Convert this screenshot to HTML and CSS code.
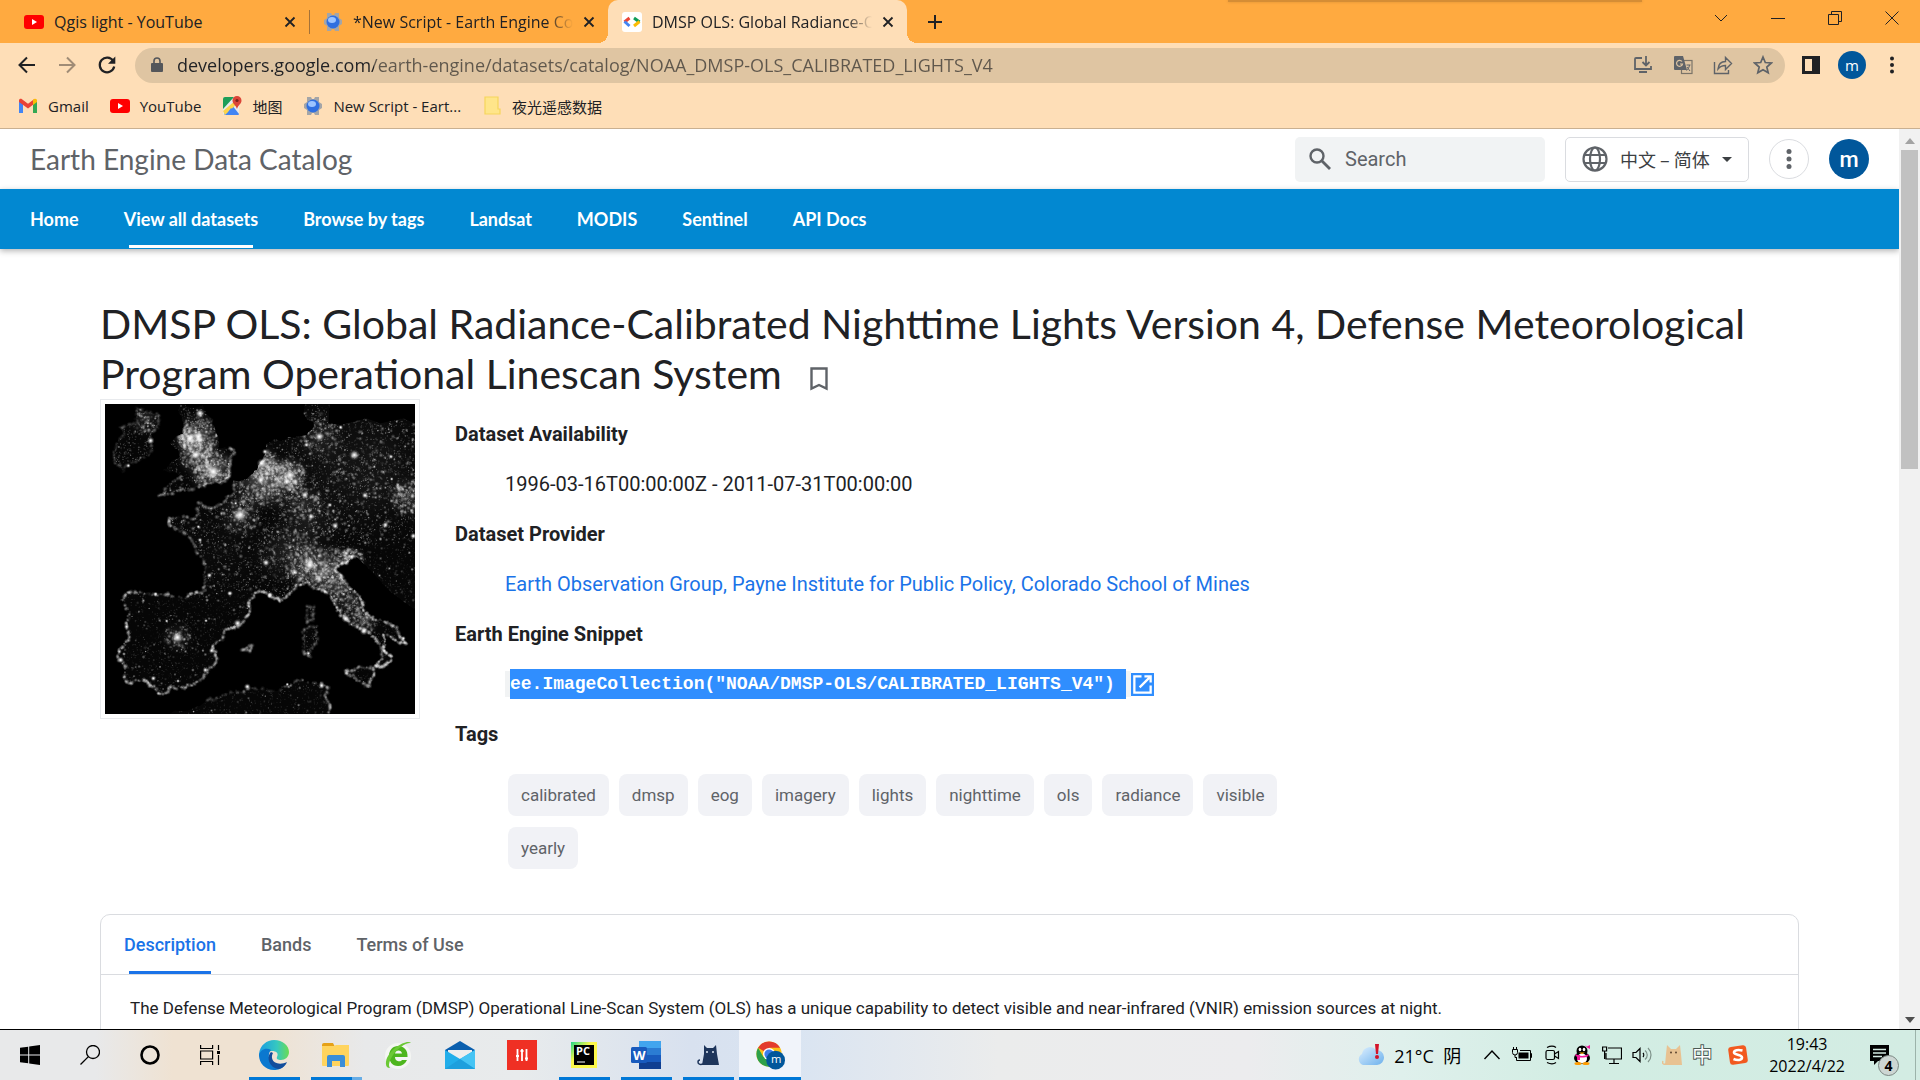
FILE: index.html
```html
<!DOCTYPE html>
<html lang="zh-CN">
<head>
    <meta charset="UTF-8">
    <meta name="viewport" content="width=device-width, initial-scale=1.0">
    <title>DMSP OLS: Global Radiance-Calibrated Nighttime Lights Version 4</title>
    <link rel="stylesheet" href="styles.css">
</head>
<body>

<!-- shared icons -->
<svg class="sprite" aria-hidden="true">
    <symbol id="close" viewBox="0 0 12 12"><path d="M1.5 1.5l9 9M10.5 1.5l-9 9" stroke="#202124" stroke-width="1.8"/></symbol>
    <symbol id="youtube" viewBox="0 0 20 14"><rect width="20" height="14" rx="3" fill="#f00"/><path d="M8 4v6l5-3z" fill="#fff"/></symbol>
    <symbol id="gear" viewBox="0 0 20 20">
        <path d="M4 1h4l1 2h2l1-2h4v5l3 2v4l-3 2v5h-4l-1-2H9l-1 2H4v-5l-3-2V8l3-2z" fill="#a3a5a8"/>
        <circle cx="10" cy="10" r="6.500" fill="#2f6fe0"/><ellipse cx="9" cy="8" rx="4" ry="3" fill="#9cc4ff"/>
    </symbol>
</svg>

<header class="browser">
    <div class="shade"></div>
    <div class="tabs">
        <div class="tab">
            <svg class="icon"><use href="#youtube"/></svg>
            <button class="tab-title">Qgis light - YouTube</button>
            <button class="tab-close" aria-label="Close"><svg><use href="#close"/></svg></button>
        </div>
        <div class="tab divided">
            <svg class="icon"><use href="#gear"/></svg>
            <button class="tab-title long">*New Script - Earth Engine Co</button>
            <button class="tab-close" aria-label="Close"><svg><use href="#close"/></svg></button>
        </div>
        <div class="tab active">
            <svg class="icon" viewBox="0 0 20 20"><rect width="20" height="20" rx="3" fill="#fff"/><g fill="none" stroke-width="3"><path d="M7.500 6L2.500 10" stroke="#ea4335"/><path d="M2.500 9.500L7.500 14" stroke="#4285f4"/><path d="M12 6l5.500 4" stroke="#0f9d58"/><path d="M17.500 9.500L12 14" stroke="#fbbc04"/></g></svg>
            <button class="tab-title long">DMSP OLS: Global Radiance-C</button>
            <button class="tab-close" aria-label="Close"><svg><use href="#close"/></svg></button>
        </div>
        <button class="new-tab" aria-label="New tab"><svg viewBox="0 0 16 16"><path d="M8 1v14M1 8h14" stroke="#202124" stroke-width="2"/></svg></button>
        <div class="window-buttons">
            <button aria-label="Search tabs"><svg viewBox="0 0 14 14"><path d="M1 4l6 6 6-6"/></svg></button>
            <button aria-label="Minimize"><svg viewBox="0 0 14 14"><path d="M0 7.500h14"/></svg></button>
            <button aria-label="Restore"><svg viewBox="0 0 14 14"><path d="M.5 3.500h10v10H.5zM3.500 3.500v-3h10v10h-3"/></svg></button>
            <button aria-label="Close window"><svg viewBox="0 0 14 14"><path d="M.5.5l13 13M13.500.5l-13 13"/></svg></button>
        </div>
    </div>

    <div class="toolbar">
        <button class="tool" aria-label="Back"><svg viewBox="0 0 20 20"><path d="M18 10H3M10 2.500L2.500 10l7.500 7.500" stroke="#202124" stroke-width="2" fill="none"/></svg></button>
        <button class="tool" aria-label="Forward"><svg viewBox="0 0 20 20"><path d="M2 10h15M10 2.500l7.500 7.500-7.500 7.500" stroke="#a08c76" stroke-width="2" fill="none"/></svg></button>
        <button class="tool" aria-label="Reload"><svg viewBox="0 0 20 20"><path d="M16.200 6A7.300 7.300 0 1 0 17.200 11.500" stroke="#202124" stroke-width="2.200" fill="none"/><path d="M18.300 1.500v7.300H11z" fill="#202124"/></svg></button>
        <div class="omnibox">
            <svg class="lock" viewBox="0 0 12 16"><rect y="6" width="12" height="9" rx="1" fill="#54565a"/><path d="M3 7V4a3 3 0 0 1 6 0v3" stroke="#54565a" stroke-width="1.600" fill="none"/></svg>
            <input class="url" type="text" aria-label="Address" value="developers.google.com/earth-engine/datasets/catalog/NOAA_DMSP-OLS_CALIBRATED_LIGHTS_V4">
            <button class="pill-icon" aria-label="Install"><svg viewBox="0 0 20 20" fill="none" stroke="#5f6368" stroke-width="1.800"><path d="M9 3H3a1 1 0 0 0-1 1v10h16v-3M13 1v9M9.500 7l3.500 3.500L16.500 7M6 17h8" /></svg></button>
            <button class="pill-icon" aria-label="Translate"><svg viewBox="0 0 20 20"><rect x="8.500" y="5.500" width="10.500" height="13" fill="none" stroke="#7b7468" stroke-width="1.200"/><path d="M2 1h8l4 14H2a1 1 0 0 1-1-1V2a1 1 0 0 1 1-1z" fill="#5f6368"/><path d="M9 6.500A3 3 0 1 0 9.500 9H7" stroke="#dfc5a2" stroke-width="1.200" fill="none"/><path d="M13.500 10h4m-1 0c-.5 3-1.500 4.500-3 5.500m.5-3.500l3 4" stroke="#5f6368" fill="none"/></svg></button>
            <button class="pill-icon" aria-label="Share"><svg viewBox="0 0 20 20" fill="none" stroke="#5f6368" stroke-width="1.400"><path d="M1.500 7v11.500h14V15M5 14c.5-5 3-7.500 7.500-7.500V2.500l6 6-6 6v-4c-3.500 0-5.500 1-7.500 3.500z"/></svg></button>
            <button class="pill-icon" aria-label="Bookmark this tab"><svg viewBox="0 0 20 20" fill="none" stroke="#5f6368" stroke-width="1.700"><path d="M10 2l2.300 5.500 6 .5-4.500 4 1.400 5.800L10 14.700l-5.200 3.100L6.200 12 1.700 8l6-.5z"/></svg></button>
        </div>
        <button class="tool" aria-label="Side panel"><svg viewBox="0 0 20 20"><path d="M1 1h18v18H1zM4 4v12h7V4z" fill="#202124" fill-rule="evenodd"/></svg></button>
        <button class="tool profile" aria-label="Profile">m</button>
        <button class="tool" aria-label="Menu"><svg viewBox="0 0 20 20" fill="#202124"><circle cx="10" cy="3.500" r="2"/><circle cx="10" cy="10" r="2"/><circle cx="10" cy="16.500" r="2"/></svg></button>
    </div>

    <nav class="bookmarks">
        <a href="#"><svg class="icon" viewBox="0 0 20 20"><path d="M1 4v13h4V7z" fill="#4285f4"/><path d="M19 4v13h-4V7z" fill="#34a853"/><path d="M1 4.500C1 2.500 3 2.500 4 3.200l6 4.600 6-4.600V8l-6 4.600L1 6z" fill="#ea4335"/><path d="M15 4l1.200-.9c1.300-.8 2.800 0 2.800 1.400V6l-4 3z" fill="#fbbc04"/></svg>Gmail</a>
        <a href="#"><svg class="icon"><use href="#youtube"/></svg>YouTube</a>
        <a href="#"><svg class="icon" viewBox="0 0 20 20"><path d="M1 3a2 2 0 0 1 2-2h14v16l-2 2H3a2 2 0 0 1-2-2z" fill="#e8eaed"/><path d="M3 1h9L1 13V3a2 2 0 0 1 2-2z" fill="#1e9e58"/><path d="M2 18L10 9l7 9-1 1H3z" fill="#4285f4"/><path d="M1 15L14 4l2 3L3 19z" fill="#fcd34b"/><path d="M9 12l8 7H4z" fill="#4285f4"/><path d="M15 0a4.500 4.500 0 0 1 4.500 4.500C19.500 8 16 9 15 13 14 9 10.500 8 10.500 4.500A4.500 4.500 0 0 1 15 0z" fill="#db4437"/><circle cx="15" cy="4.500" r="1.600" fill="#7b231b"/></svg>地图</a>
        <a href="#"><svg class="icon"><use href="#gear"/></svg>New Script - Eart...</a>
        <a href="#"><svg class="icon" viewBox="0 0 20 20"><path d="M3 1h13v12h2v5H3z" fill="#ffe58a" stroke="#f5d55c" stroke-width="1.200"/></svg>夜光遥感数据</a>
    </nav>
</header>

<div class="viewport">
    <div class="page">
        <header class="site-header">
            <a class="site-name" href="#">Earth Engine Data Catalog</a>
            <label class="search">
                <svg viewBox="0 0 24 24"><circle cx="9" cy="9" r="6.500" fill="none" stroke="#5f6368" stroke-width="2.400"/><path d="M14 14l8 8" stroke="#5f6368" stroke-width="2.800"/></svg>
                <input type="search" placeholder="Search" aria-label="Search">
            </label>
            <label class="language">
                <svg class="globe" viewBox="0 0 26 26" fill="none" stroke="#5f6368" stroke-width="2.200"><circle cx="13" cy="13" r="11.500"/><ellipse cx="13" cy="13" rx="5" ry="11.500"/><path d="M2.500 9h21M2.500 17h21"/></svg>
                <select aria-label="Language"><option>中文 – 简体</option></select>
                <svg class="arrow" viewBox="0 0 10 5"><path d="M0 0h10L5 5z" fill="#3c4043"/></svg>
            </label>
            <button class="more" aria-label="More"><svg viewBox="0 0 20 20" fill="#5f6368"><circle cx="10" cy="2.500" r="2.500"/><circle cx="10" cy="10" r="2.500"/><circle cx="10" cy="17.500" r="2.500"/></svg></button>
            <button class="avatar" aria-label="Account">m</button>
        </header>

        <nav class="site-nav">
            <a href="#">Home</a>
            <a href="#" class="current">View all datasets</a>
            <a href="#">Browse by tags</a>
            <a href="#">Landsat</a>
            <a href="#">MODIS</a>
            <a href="#">Sentinel</a>
            <a href="#">API Docs</a>
        </nav>

        <main>
            <h1>DMSP OLS: Global Radiance-Calibrated Nighttime Lights Version 4, Defense Meteorological Program Operational Linescan System
                <button class="save" aria-label="Save page"><svg viewBox="0 0 18 24"><path d="M1.500 1.500h15v20L9 18l-7.500 3.500z" fill="none" stroke="#5f6368" stroke-width="2.400"/></svg></button></h1>

            <div class="dataset">
                <div class="sample"><canvas id="lights" width="310" height="310"></canvas></div>
                <dl>
                    <dt>Dataset Availability</dt>
                    <dd>1996-03-16T00:00:00Z - 2011-07-31T00:00:00</dd>
                    <dt>Dataset Provider</dt>
                    <dd><a href="#">Earth Observation Group, Payne Institute for Public Policy, Colorado School of Mines</a></dd>
                    <dt>Earth Engine Snippet</dt>
                    <dd class="snippet"><code><span>ee.ImageCollection("NOAA/DMSP-OLS/CALIBRATED_LIGHTS_V4")</span></code><a href="#" aria-label="Open in editor"><svg viewBox="0 0 24 24" fill="none" stroke="#fff" stroke-width="2.400"><path d="M11 3.500H3.500v17h17V13M14 3.500h6.500V10M20 4L9 15"/></svg></a></dd>
                    <dt>Tags</dt>
                    <dd class="chips">
                        <a href="#">calibrated</a>
                        <a href="#">dmsp</a>
                        <a href="#">eog</a>
                        <a href="#">imagery</a>
                        <a href="#">lights</a>
                        <a href="#">nighttime</a>
                        <a href="#">ols</a>
                        <a href="#">radiance</a>
                        <a href="#">visible</a>
                        <a href="#">yearly</a>
                    </dd>
                </dl>
            </div>

            <section class="card">
                <div class="card-tabs">
                    <button class="selected">Description</button>
                    <button>Bands</button>
                    <button>Terms of Use</button>
                </div>
                <p>The Defense Meteorological Program (DMSP) Operational Line-Scan System (OLS) has a unique capability to detect visible and near-infrared (VNIR) emission sources at night.</p>
            </section>
        </main>
    </div>
    <div class="scrollbar">
        <svg viewBox="0 0 10 6"><path d="M5 0l5 6H0z" fill="#a3a3a3"/></svg>
        <div class="track"><div class="thumb"></div></div>
        <svg viewBox="0 0 10 6"><path d="M5 6l5-6H0z" fill="#505050"/></svg>
    </div>
</div>

<footer class="taskbar">
    <div class="system">
        <button aria-label="Start"><svg viewBox="0 0 20 20"><path d="M0 2.800l8.200-1.100v7.800H0zM9.200 1.500L20 0v9.500H9.200zM0 10.500h8.200v7.800L0 17.200zM9.200 10.500H20V20L9.200 18.500z"/></svg></button>
        <button aria-label="Search"><svg viewBox="0 0 20 20" fill="none" stroke="#000" stroke-width="1.300"><circle cx="13" cy="7" r="6.500"/><path d="M8.400 11.600L.5 19.500"/></svg></button>
        <button aria-label="Cortana"><svg viewBox="0 0 20 20"><circle cx="10" cy="10" r="8.500" fill="none" stroke="#000" stroke-width="2.600"/></svg></button>
        <button aria-label="Task view"><svg viewBox="0 0 20 20" fill="none" stroke="#000" stroke-width="1.200"><path d="M.6 0v3.500h12V0M.6 6h12v8H.6zM.6 20v-3.500h12V20M18.500 0v5M18.500 10v10"/><path d="M17 6h3v3h-3z" fill="#000" stroke="none"/></svg></button>
    </div>
    <div class="apps">
        <button class="running" aria-label="Edge"><svg viewBox="0 0 30 30"><defs><linearGradient id="edgeTop"><stop offset="0" stop-color="#1b9de2"/><stop offset=".6" stop-color="#36c8c0"/><stop offset="1" stop-color="#6bdc52"/></linearGradient></defs><path d="M0 14C1 5 8 0 15 0c9 0 15 6 15 12 0 5-4 8-8 8-3 0-5-1-4-3 2-4-1-6-5-6C7 11 3 14 0 17z" fill="url(#edgeTop)"/><path d="M0 15c1-5 7-8 12-5-3 3-3 9 1 13 4 4 9 5 13 2-3 4-7 5-11 5C6 30 0 23 0 15z" fill="#0b78cf"/><path d="M12 12c-5 5-2 16 8 17 4-1 7-4 8-7-6 3-14 2-15-4-.3-2 .3-4 1-5z" fill="#124d9c"/></svg></button>
        <button class="running stacked" aria-label="Explorer"><svg viewBox="0 0 30 30"><path d="M1 5a2 2 0 0 1 2-2h9l2 4H1z" fill="#e6a117"/><path d="M1 6h12l2-1h13v20a1 1 0 0 1-1 1H2a1 1 0 0 1-1-1z" fill="#ffd45e"/><path d="M6 27V17a2 2 0 0 1 2-2h14a2 2 0 0 1 2 2v10h-5v-6h-8v6z" fill="#3a8ed8"/></svg></button>
        <button aria-label="360 browser"><svg viewBox="0 0 30 30"><circle cx="15" cy="16" r="13" fill="#f4f6f3"/><path d="M24 20c-2 4-5 6-9 6-6 0-9-5-9-10 0-6 4-10 9-10 6 0 10 4 9.500 11H12c0 5 6 5 7 3zM12 13.500h7c-.5-4-6.500-4-7 0z" fill="#4eb61e" fill-rule="evenodd"/><path d="M28 3C24-1 5 9 3 22c-.5 4 1 6 4 6-2-2-1-7 3-13C14 9 23 2 28 3z" fill="#6bc935"/></svg></button>
        <button aria-label="Mail"><svg viewBox="0 0 30 30"><path d="M0 10L15 1l15 9v3H0z" fill="#0a5fae"/><path d="M3 10h24v9H3z" fill="#eee"/><path d="M0 10l15 9 15-9v19H0z" fill="#22aeea"/><path d="M15 19L30 10v19z" fill="#45c4f4"/><path d="M0 29l15-10 15 10z" fill="#1d9fdd"/></svg></button>
        <button aria-label="Mixer"><svg viewBox="0 0 30 30"><path d="M0 0h30v30H0z" fill="#ef3024"/><path d="M10.500 9v12M15 9v12M19.500 9v12" stroke="#fff" stroke-width="1.800"/><path d="M9 16h3M13.500 11h3M18 18.500h3" stroke="#fff" stroke-width="2"/></svg></button>
        <button class="running" aria-label="PyCharm"><svg viewBox="0 0 30 30"><defs><linearGradient id="pc" x2="1" y2="1"><stop stop-color="#21d789"/><stop offset=".4" stop-color="#fcf84a"/></linearGradient></defs><path d="M2 2h26v26H2z" fill="url(#pc)"/><path d="M5 5h20v20H5z"/><path d="M8 22h8" stroke="#aaa" stroke-width="1.500"/><text class="pc-text" x="7" y="15">PC</text></svg></button>
        <button class="running" aria-label="Word"><svg viewBox="0 0 30 30"><path d="M8 1h22v28H8z" fill="#103f91"/><path d="M8 1h22v8H8z" fill="#41a5ee"/><path d="M8 8h22v7H8z" fill="#2b7cd3"/><path d="M8 15h22v7H8z" fill="#185abd"/><rect y="7" width="16" height="16" rx="1.500" fill="#185abd"/><text class="word-text" x="2" y="20">W</text></svg></button>
        <button class="running" aria-label="Cat"><svg viewBox="0 0 30 30"><path d="M11 5l3 3h6l3-3 1 9 2 11H9l2-11z" fill="#1e355b"/><path d="M10 24c-3 1-5 0-5-2 0-1 1-2 2-2" fill="none" stroke="#1e355b" stroke-width="1.500"/><circle cx="14" cy="12" r="1" fill="#dfe7f2"/><circle cx="20" cy="12" r="1" fill="#dfe7f2"/></svg></button>
        <button class="running open" aria-label="Chrome"><svg viewBox="0 0 32 32"><circle cx="15" cy="15" r="13.500" fill="#fbc116"/><path d="M15 15L3.300 8.300A13.500 13.500 0 0 1 26.700 8.300H15z" fill="#e33b2e"/><path d="M15 15l6 3-6 10.500A13.500 13.500 0 0 1 3.300 8.300L9 18z" fill="#2da04a"/><circle cx="15" cy="15" r="6.500" fill="#fff"/><circle cx="15" cy="15" r="5" fill="#3b7ded"/><circle cx="22" cy="21.500" r="10" fill="#01579b"/><text class="chrome-text" x="17" y="25">m</text></svg></button>
    </div>
    <div class="tray">
        <button class="weather"><svg viewBox="0 0 28 24"><defs><linearGradient id="cloud" y2="1" x2="1"><stop stop-color="#dcefff"/><stop offset="1" stop-color="#6db1ec"/></linearGradient></defs><path d="M7 22a6 6 0 0 1-1-11 8 8 0 0 1 14-4 7.500 7.500 0 0 1 1 15z" fill="url(#cloud)"/><path d="M19 1h4l-1 10h-2z" fill="#d4132a"/><circle cx="21" cy="14" r="2" fill="#d4132a"/></svg>21°C&nbsp;&nbsp;阴</button>
        <div class="tray-icons">
            <button aria-label="Hidden icons"><svg viewBox="0 0 20 20" fill="none" stroke="#000" stroke-width="1.400"><path d="M2.500 14L10 6l7.500 8"/></svg></button>
            <button aria-label="Battery"><svg viewBox="0 0 20 20"><path d="M6.500 7.500h10v6h-10z"/><path d="M4.500 12v3.500h14v-10H8M18.500 8.500h1v4h-1M.5 4.500h5v3a2.500 2.500 0 0 1-5 0zM1.500 2v3M4.500 2v3M3 10v2.500h2" fill="none" stroke="#000"/></svg></button>
            <button aria-label="Meet now"><svg viewBox="0 0 20 20" fill="none" stroke="#000" stroke-width="1.200"><rect x="4" y="5.500" width="8.500" height="9" rx="1.500"/><path d="M12.500 9l4-2.500v7l-4-2.500M5 2.500c3-1.500 7-1.500 9 0M5 17.500c3 1.500 7 1.500 9 0"/></svg></button>
            <button aria-label="QQ"><svg viewBox="0 0 20 20"><ellipse cx="10" cy="6" rx="5.500" ry="5.500"/><ellipse cx="10" cy="13" rx="8" ry="6"/><ellipse cx="10" cy="13.500" rx="5" ry="5" fill="#fff"/><ellipse cx="8" cy="4.500" rx="1.300" ry="1.800" fill="#fff"/><ellipse cx="12" cy="4.500" rx="1.300" ry="1.800" fill="#fff"/><path d="M3.500 9c4 2.500 9 2.500 13 0v2c-4 2-9 2-13 0zM5 10h3v5H5zM13 0l2 1.500L18 0v4l-3-1.500z" fill="#f2189c"/><path d="M7 7.500h6L10 9z" fill="#ffb000"/><ellipse cx="6" cy="18.500" rx="3.500" ry="1.500" fill="#ff9d00"/><ellipse cx="14" cy="18.500" rx="3.500" ry="1.500" fill="#ff9d00"/></svg></button>
            <button aria-label="Network"><svg viewBox="0 0 20 20" fill="none" stroke="#000" stroke-width="1.200"><path d="M6 3h13.500v11H4V8M7 18.500h10M12 14v4.500M.6 2h4v4h-4zM2.600 6v8"/></svg></button>
            <button aria-label="Volume"><svg viewBox="0 0 20 20" fill="none" stroke="#000" stroke-width="1.200"><path d="M1 7.500h3l4-4v13l-4-4H1zM11 8c1 1 1 3 0 4"/><path d="M13 5.500c3 2.500 3 6.500 0 9M16 3c4 4 4 10 0 14" stroke="#7d9189"/></svg></button>
            <button aria-label="Cat"><svg viewBox="0 0 20 20"><path d="M5 0l4 4h5l4-4 1 9 1 11H3L4 9z" fill="#e8c292"/><path d="M4 19c-3 1-4-1-3-3" stroke="#e8c292" stroke-width="1.500" fill="none"/><circle cx="9" cy="7.500" r="1" fill="#5f4630"/><circle cx="14" cy="7.500" r="1" fill="#5f4630"/></svg></button>
            <button class="ime">中</button>
            <button class="sogou" aria-label="Sogou"><svg viewBox="0 0 20 20"><rect x="1" y="1" width="18" height="18" rx="3" fill="#f2591f" transform="rotate(-8 10 10)"/><path d="M14.500 5.500C10 4.500 6 5 6 7.500s8 2 8 5-5 3-8.500 1.500" fill="none" stroke="#fff" stroke-width="2.600"/></svg></button>
        </div>
        <button class="clock"><span>19:43</span><span>2022/4/22</span></button>
        <button class="notifications" aria-label="Notifications"><svg viewBox="0 0 22 22"><path d="M1 1h19v16H9l-4 4v-4H1z"/><path d="M4 5.500h13M4 9h13M4 12.500h9" stroke="#d3eae2" stroke-width="1.300"/></svg><span class="badge">4</span></button>
        <button class="show-desktop" aria-label="Show desktop"></button>
    </div>
</footer>

<script src="lights.js"></script>
</body>
</html>
```
FILE: styles.css
```css
* {
    box-sizing: border-box;
}

body {
    margin: 0;
    height: 100vh;
    display: flex;
    flex-direction: column;
    overflow: hidden;
    font-family: Roboto, "Noto Sans CJK SC", sans-serif;
    color: #202124;
    background-color: #fff;
}

button {
    border: none;
    padding: 0;
    background: none;
    color: inherit;
    font: inherit;
    display: flex;
    align-items: center;
    justify-content: center;
}

a {
    color: inherit;
    text-decoration: none;
}

.sprite {
    display: none;
}

/* browser chrome */
.browser {
    position: relative;
    flex-shrink: 0;
    background-color: #fedeb7;
    border-bottom: 1px solid #c9b091;
    font-family: "Open Sans", "Noto Sans CJK SC", sans-serif;
    font-size: 15px;
}

.shade {
    position: absolute;
    top: 0;
    right: 278px;
    width: 414px;
    height: 2px;
    background-color: #d58d35;
    box-shadow: 0 0 3px #d58d35;
}

.tabs {
    display: flex;
    height: 43px;
    padding-left: 10px;
    background-color: #ffaa40;
    font-size: 16px;
}

.tab {
    position: relative;
    display: flex;
    align-items: center;
    width: 299px;
    padding: 0 13px 0 14px;
    gap: 10px;
}

.tab.divided {
    background: linear-gradient(#a57238, #a57238) 0 10px / 1px 24px no-repeat;
}

.tab.active {
    background-color: #fedeb7;
    border-radius: 10px 10px 0 0;
}

/* curved feet of the active tab */
.tab.active::before,
.tab.active::after {
    content: "";
    position: absolute;
    bottom: 0;
    width: 10px;
    height: 10px;
}

.tab.active::before {
    right: 100%;
    background: radial-gradient(circle at 0 0, transparent 10px, #fedeb7 10px);
}

.tab.active::after {
    left: 100%;
    background: radial-gradient(circle at 100% 0, transparent 10px, #fedeb7 10px);
}

.icon {
    width: 20px;
    height: 20px;
    flex-shrink: 0;
}

.tab-title {
    flex: 1;
    min-width: 0;
    white-space: nowrap;
    justify-content: flex-start;
}

.tab-title.long {
    -webkit-mask-image: linear-gradient(to right, #000 88%, transparent);
    mask-image: linear-gradient(to right, #000 88%, transparent);
}

.tab-close svg {
    width: 12px;
    height: 12px;
}

.new-tab {
    width: 56px;
}

.new-tab svg {
    width: 16px;
    height: 16px;
}

.window-buttons {
    display: flex;
    margin-left: auto;
    height: 36px;
}

.window-buttons button {
    width: 57px;
}

.window-buttons svg {
    width: 14px;
    height: 14px;
    fill: none;
    stroke: #202124;
}

.toolbar {
    display: flex;
    align-items: center;
    height: 44px;
    padding: 0 8px 0 7px;
}

.tool {
    width: 40px;
    height: 40px;
}

.tool svg {
    width: 20px;
    height: 20px;
}

.omnibox {
    flex: 1;
    display: flex;
    align-items: center;
    height: 35px;
    margin: 0 6px 0 8px;
    padding: 0 2px 0 16px;
    border-radius: 18px;
    background-color: #dfc5a2;
}

.lock {
    width: 12px;
    height: 16px;
    margin-right: 14px;
}

.url {
    flex: 1;
    border: none;
    outline: none;
    padding: 0;
    font-family: "Open Sans", sans-serif;
    font-size: 18px;
    /* host dark, path grey */
    color: transparent;
    background: linear-gradient(to right, #202124 197px, #5f574c 197px);
    -webkit-background-clip: text;
    background-clip: text;
}

.pill-icon {
    width: 40px;
}

.pill-icon svg {
    width: 20px;
    height: 20px;
}

.tool.profile {
    width: 28px;
    height: 28px;
    margin: 0 6px 0 7px;
    border-radius: 50%;
    background-color: #01579b;
    color: #fff;
    font-size: 15px;
}

.bookmarks {
    display: flex;
    align-items: center;
    height: 41px;
    padding: 0 0 3px 18px;
    gap: 21px;
}

.bookmarks a {
    display: flex;
    align-items: center;
    gap: 10px;
}

/* web page */
.viewport {
    flex: 1;
    min-height: 0;
    display: flex;
}

.page {
    flex: 1;
    min-width: 0;
    overflow: hidden;
}

.site-header {
    display: flex;
    align-items: center;
    height: 60px;
    padding: 0 30px;
    gap: 20px;
}

.site-name {
    margin-right: auto;
    font-family: Lato, sans-serif;
    font-size: 28px;
    color: #5f6368;
}

.search {
    display: flex;
    align-items: center;
    width: 250px;
    height: 45px;
    padding: 0 13px;
    gap: 13px;
    border-radius: 5px;
    background-color: #f1f3f4;
}

.search svg {
    width: 24px;
    height: 24px;
    flex-shrink: 0;
}

.search input {
    width: 100%;
    border: none;
    outline: none;
    padding: 0;
    background: none;
    font-family: Roboto, sans-serif;
    font-size: 20px;
}

.search input::placeholder {
    color: #5f6368;
}

.language {
    display: flex;
    align-items: center;
    width: 184px;
    height: 45px;
    padding: 0 16px;
    border: 1px solid #dadce0;
    border-radius: 5px;
}

.globe {
    width: 26px;
    height: 26px;
    margin-right: 12px;
}

.language select {
    flex: 1;
    min-width: 0;
    appearance: none;
    border: none;
    padding: 0;
    background: none;
    color: #3c4043;
    font-family: "Noto Sans CJK SC", sans-serif;
    font-size: 18px;
}

.arrow {
    width: 10px;
    height: 5px;
}

.more,
.avatar {
    width: 40px;
    height: 40px;
    border-radius: 50%;
}

.more {
    border: 1px solid #dadce0;
}

.more svg {
    width: 20px;
    height: 20px;
}

.avatar {
    background-color: #01579b;
    color: #fff;
    font-size: 22px;
    font-weight: 500;
}

.site-nav {
    position: relative;
    display: flex;
    height: 60px;
    padding: 0 30px;
    gap: 45px;
    background-color: #0288d1;
    box-shadow: 0 2px 6px rgba(0, 0, 0, 0.3);
    color: #fff;
    font-family: Lato, sans-serif;
    font-size: 18px;
    font-weight: 700;
}

.site-nav a {
    display: flex;
    align-items: center;
}

.current {
    background: linear-gradient(#fff, #fff) center 56px / calc(100% - 10px) 3px no-repeat;
}

main {
    padding: 50px 100px 0;
}

h1 {
    margin: 0;
    font-family: Lato, sans-serif;
    font-size: 41px;
    line-height: 50px;
    font-weight: 400;
}

.save {
    display: inline-flex;
    margin-left: 18px;
    vertical-align: middle;
}

.save svg {
    width: 18px;
    height: 24px;
}

.dataset {
    display: flex;
    align-items: flex-start;
    gap: 35px;
    font-size: 20px;
    line-height: 30px;
}

.sample {
    padding: 4px;
    border: 1px solid #e8eaed;
}

.sample canvas {
    display: block;
    background-color: #000;
}

dl {
    margin: 20px 0 0;
    max-width: 850px;
}

dt {
    font-weight: 700;
}

dd {
    margin: 20px 0 20px 50px;
}

dd a {
    color: #1a73e8;
}

.snippet {
    display: flex;
    align-items: center;
}

code {
    padding: 0 5px;
    background: linear-gradient(#f1f3f4, #f1f3f4) center / 100% 26px no-repeat;
    font-family: "Liberation Mono", monospace;
    font-size: 18px;
    font-weight: 700;
}

code span {
    display: block;
    padding-right: 11px;
    line-height: 30px;
    color: #fff;
    background-color: #308efe;
}

.snippet a {
    display: flex;
    background-color: #308efe;
}

.snippet svg {
    width: 23px;
    height: 23px;
}

.chips {
    display: flex;
    flex-wrap: wrap;
    gap: 11px 10px;
    margin: 25px 0 0 53px;
}

.chips a {
    padding: 0 13px;
    border-radius: 8px;
    background-color: #f1f2f6;
    color: #5f6368;
    font-size: 17px;
    line-height: 42px;
}

.card {
    margin-top: 45px;
    border: 1px solid #dadce0;
    border-radius: 10px;
}

.card-tabs {
    display: flex;
    height: 60px;
    padding: 0 23px;
    gap: 45px;
    border-bottom: 1px solid #dadce0;
    color: #5f6368;
    font-size: 18px;
    font-weight: 500;
}

.card-tabs .selected {
    color: #1a73e8;
    background: linear-gradient(#1a73e8, #1a73e8) center 56px / calc(100% - 10px) 3px no-repeat;
}

.card p {
    margin: 0;
    padding: 18px 29px;
    font-size: 17px;
    line-height: 30px;
}

.scrollbar {
    display: flex;
    flex-direction: column;
    align-items: center;
    width: 21px;
    padding: 9px 0 6px;
    gap: 6px;
    background-color: #f1f1f1;
}

.scrollbar svg {
    width: 10px;
    height: 6px;
}

.track {
    flex: 1;
    width: 17px;
}

.thumb {
    height: 37%;
    background-color: #c1c1c1;
}

/* taskbar */
.taskbar {
    display: flex;
    flex-shrink: 0;
    height: 51px;
    border-top: 1px solid #000;
    background: linear-gradient(to right, #e8e9ea 5%, #efe2d2 9%, #efe2d2 14%, #e8e9ea 19%, #e8ebec 27%, #d8e1ef 36%, #d9e4f2 41%, #ebecec 52%, #ececee 65%, #dff0ec 73%, #d2ede3 82%, #d3ece3);
    font-family: "Open Sans", "Noto Sans CJK SC", sans-serif;
    color: #000;
}

.system,
.apps,
.tray,
.tray-icons {
    display: flex;
}

.system button {
    width: 60px;
}

.system svg {
    width: 20px;
    height: 20px;
}

.apps {
    margin-left: 3px;
}

.apps button {
    width: 62px;
}

.apps svg {
    width: 30px;
    height: 30px;
}

.running {
    background: linear-gradient(#0078d7, #0078d7) center bottom / 51px 3px no-repeat;
}

.stacked {
    background: linear-gradient(to right, #0078d7 80%, #67ade6 80%) center bottom / 51px 3px no-repeat;
}

.open {
    background: linear-gradient(#0078d7, #0078d7) center bottom / 100% 3px no-repeat, #f1f4fa;
}

.pc-text,
.word-text,
.chrome-text {
    fill: #fff;
    font-size: 11px;
    font-weight: 700;
}

.word-text {
    font-size: 13px;
}

.chrome-text {
    font-size: 12px;
    font-weight: 400;
}

.tray {
    margin-left: auto;
}

.weather {
    gap: 10px;
    margin-right: 16px;
    font-size: 18px;
}

.weather svg {
    width: 28px;
    height: 24px;
}

.tray-icons {
    align-items: center;
}

.tray-icons button {
    width: 30px;
}

.tray-icons svg {
    width: 20px;
    height: 20px;
}

.tray-icons .ime {
    font-family: "Noto Sans CJK SC", sans-serif;
    font-size: 20px;
    line-height: 30px;
    color: #fff;
    -webkit-text-stroke: 2px #4b5a55;
    paint-order: stroke fill;
}

.tray-icons .sogou {
    margin-left: 6px;
}

.clock {
    flex-direction: column;
    margin: 0 24px 0 16px;
    font-size: 16px;
    line-height: 22px;
}

.notifications {
    position: relative;
    width: 30px;
    margin-right: 16px;
    justify-content: flex-start;
}

.notifications svg {
    width: 22px;
    height: 22px;
}

.badge {
    position: absolute;
    right: 0;
    bottom: 4px;
    width: 21px;
    height: 21px;
    border: 1px solid #7c8783;
    border-radius: 50%;
    background-color: #cdd6d3;
    font-size: 14px;
    line-height: 19px;
    font-weight: 700;
    text-align: center;
}

.show-desktop {
    width: 5px;
    border-left: 1px solid #9cb3aa;
}
```
FILE: lights.js
```js
// Night lights of Western Europe, drawn on the dataset thumbnail.
// Shapes use a 1020 x 1272 grid, the canvas shows the part from (45, 342).
var canvas = document.getElementById("lights");
var ctx = canvas.getContext("2d");

ctx.scale(1 / 3, 1 / 3);
ctx.translate(-45, -342);

var seed = 7;
function rand() {
    seed = (seed * 16807) % 2147483647;
    return seed / 2147483647;
}

var land = {
    ireland: [[140,355],[205,370],[205,400],[185,430],[190,480],[150,510],[100,545],[75,520],[75,480],[100,440],[90,410],[140,400]],
    britain: [[270,342],[340,342],[370,390],[385,440],[385,475],[420,475],[435,490],[420,525],[418,560],[390,582],[330,588],[270,600],[205,618],[230,590],[280,555],[220,540],[240,520],[270,500],[240,460],[280,430],[280,400],[265,370]],
    balkans: [[645,342],[720,342],[715,400],[750,405],[830,385],[870,400],[940,385],[975,400],[975,960],[900,905],[840,840],[810,810],[795,797]],
    italy: [[795,797],[765,820],[735,840],[760,870],[800,910],[820,960],[850,990],[920,1020],[950,1060],[930,1060],[880,1035],[880,1075],[905,1100],[880,1130],[855,1130],[875,1080],[850,1040],[800,1010],[765,985],[735,950],[700,900],[655,875],[610,900],[570,935],[540,920],[500,905]],
    iberia: [[500,905],[475,935],[475,975],[440,1010],[405,1020],[365,1075],[380,1110],[350,1150],[310,1185],[240,1190],[210,1215],[180,1190],[160,1170],[105,1175],[85,1110],[105,1060],[110,1000],[95,930],[125,905],[200,915],[290,920],[335,910]],
    france: [[335,910],[345,860],[340,810],[310,760],[260,720],[235,700],[240,685],[310,690],[325,635],[360,655],[400,640],[430,610],[430,570],[490,550],[520,500],[530,460],[580,450],[650,435],[670,400],[640,370]],
    sicily: [[765,1140],[800,1135],[850,1130],[850,1160],[840,1190],[800,1170],[770,1150]],
    sardinia: [[635,1025],[680,1010],[680,1060],[660,1100],[640,1090]],
    corsica: [[650,950],[672,950],[670,990],[650,1000]],
    mallorca: [[455,1078],[485,1065],[480,1085]],
    africa: [[190,1272],[350,1230],[420,1205],[480,1190],[600,1185],[690,1180],[715,1195],[705,1220],[720,1250],[710,1272]]
};

// x, y, radius, strength
var regions = [
    [325,440,60,0.5],[370,545,60,0.6],[320,495,50,0.4],[300,445,35,0.5],[515,520,45,0.5],[510,575,70,0.5],
    [600,555,45,0.5],[560,580,70,0.25],[650,700,90,0.15],[640,640,50,0.2],[690,440,60,0.2],
    [660,825,60,0.45],[730,835,60,0.4],[785,810,35,0.4],[955,620,50,0.35],[850,600,150,0.08],[720,520,170,0.08],
    [780,930,50,0.25],[720,890,50,0.3],[820,990,40,0.3],[165,380,50,0.2],[450,675,55,0.25],[262,1042,40,0.2],
    [400,780,150,0.05],[590,790,80,0.2],[880,480,150,0.06]
];

var cities = [
    [370,545,16],[318,494,11],[325,440,11],[300,445,11],[330,370,10],[182,452,8],[515,520,10],[512,570,9],
    [600,555,11],[590,575,8],[688,440,10],[793,495,11],[450,675,16],[262,1042,13],[443,1000,9],[660,825,12],
    [614,847,7],[767,985,9],[822,1023,9],[528,818,8],[358,856,6],[420,910,6],[330,750,5],[736,708,7],
    [886,705,7],[825,616,7],[645,615,8],[663,680,7],[540,915,7],[92,1110,7],[110,1010,6],[190,1165,6],
    [346,1140,6],[365,1082,6],[695,1187,7],[472,1190,7],[592,1183,4],[650,465,5],[903,500,5],[720,645,5],
    [905,567,4],[785,800,6],[655,1090,5],[348,992,4],[230,993,4],[970,738,7],[752,412,5],[115,527,5],
    [525,485,6],[437,640,4],[325,710,4],[264,1173,4],[197,912,5],[940,1045,5],[705,905,5]
];

// breaks every edge in two a few times so that coasts look natural
function roughen(points, closed) {
    for (var pass = 0; pass < 3; pass++) {
        var out = [];
        points.forEach(function(p, i) {
            out.push(p);
            if (i === points.length - 1 && !closed) {
                return;
            }
            var q = points[(i + 1) % points.length];
            var len = Math.sqrt(Math.pow(q[0] - p[0], 2) + Math.pow(q[1] - p[1], 2));
            out.push([(p[0] + q[0]) / 2 + (rand() - 0.5) * len * 0.35, (p[1] + q[1]) / 2 + (rand() - 0.5) * len * 0.35]);
        });
        points = out;
    }
    return points;
}

land.italy = roughen(land.italy);
land.iberia = roughen(land.iberia);
land.france = roughen(land.france);
["ireland", "britain", "sicily", "sardinia", "corsica", "mallorca", "africa"].forEach(function(name) {
    land[name] = roughen(land[name], true);
});

function tracePath(points) {
    var path = new Path2D();
    points.forEach(function(p, i) {
        if (i === 0) {
            path.moveTo(p[0], p[1]);
        } else {
            path.lineTo(p[0], p[1]);
        }
    });
    path.closePath();
    return path;
}

function glow(x, y, r, alpha) {
    var g = ctx.createRadialGradient(x, y, 0, x, y, r);
    g.addColorStop(0, "rgba(255,255,255," + alpha + ")");
    g.addColorStop(0.4, "rgba(255,255,255," + alpha * 0.5 + ")");
    g.addColorStop(1, "rgba(255,255,255,0)");
    ctx.fillStyle = g;
    ctx.fillRect(x - r, y - r, r * 2, r * 2);
}

var all = tracePath(land.balkans.concat(land.italy, land.iberia, land.france));
["ireland", "britain", "sicily", "sardinia", "corsica", "mallorca", "africa"].forEach(function(name) {
    all.addPath(tracePath(land[name]));
});

ctx.save();
ctx.clip(all);

ctx.fillStyle = "#060606";
ctx.fill(all);

regions.forEach(function(r) {
    glow(r[0], r[1], r[2] * 1.3, r[3] * 0.5);
});

// faint speckle over all land, Iberia and Africa are darker
for (var i = 0; i < 24000; i++) {
    var x = 45 + rand() * 930;
    var y = 342 + rand() * 930;
    var dim = (x < 480 && y > 900) || y > 1120 || (x > 820 && y > 760) ? 0.5 : 1;
    ctx.fillStyle = "rgba(255,255,255," + Math.pow(rand(), 3) * 0.4 * dim + ")";
    ctx.fillRect(x, y, 3, 3);
}

// small towns
for (i = 0; i < 1400; i++) {
    glow(45 + rand() * 930, 342 + rand() * 930, 3 + rand() * 3, 0.15 + Math.pow(rand(), 3) * 0.6);
}

// dense areas
regions.forEach(function(r) {
    var count = r[2] * r[3] * 8;
    for (var n = 0; n < count; n++) {
        var a = rand() * Math.PI * 2;
        var d = Math.sqrt(rand()) * r[2];
        glow(r[0] + Math.cos(a) * d, r[1] + Math.sin(a) * d, 3 + rand() * 5, 0.1 + rand() * 0.4);
    }
});
ctx.restore();

// lit coastlines
function coast(points, alpha) {
    for (var k = 0; k < points.length - 1; k++) {
        for (var s = 0; s < 3; s++) {
            var t = rand();
            glow(
                points[k][0] + (points[k + 1][0] - points[k][0]) * t + rand() * 6 - 3,
                points[k][1] + (points[k + 1][1] - points[k][1]) * t + rand() * 6 - 3,
                4 + rand() * 4, rand() * alpha
            );
        }
    }
}

coast(land.italy, 0.55);
coast(land.iberia, 0.5);
coast(land.france.slice(0, 96), 0.25);
coast(land.sicily, 0.35);
coast(land.sardinia, 0.2);
coast(land.corsica, 0.15);
coast(land.mallorca, 0.25);
coast(land.africa.slice(8, 72), 0.25);
coast(land.britain.slice(40, 112), 0.3);
coast(land.ireland, 0.12);

cities.forEach(function(c) {
    glow(c[0], c[1], c[2] * 1.5, 0.7);
    glow(c[0], c[1], c[2], 1);
});
```
